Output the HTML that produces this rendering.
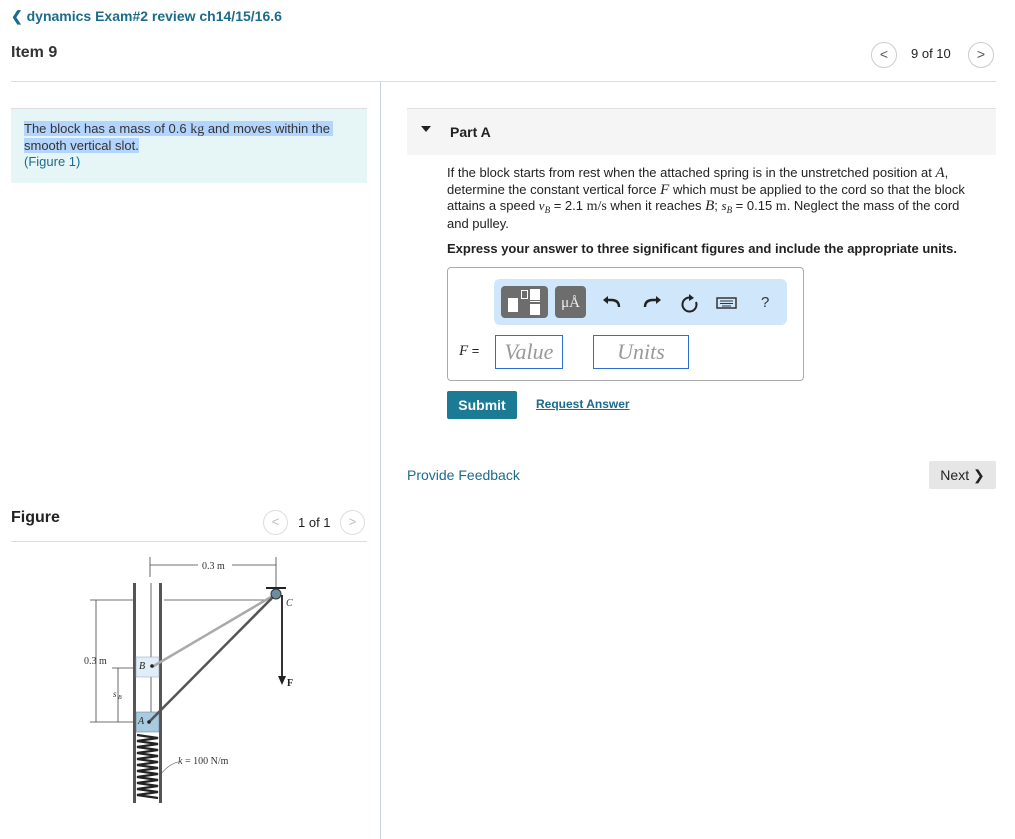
<!DOCTYPE html>
<html><head><meta charset="utf-8"><style>
body{margin:0;width:1015px;height:839px;background:#fff;font-family:"Liberation Sans",Arial,sans-serif;color:#333;position:relative;overflow:hidden}
.a{position:absolute}
.m{font-family:"Liberation Serif",serif;font-style:italic}
sub{line-height:0;font-size:9px;vertical-align:-3px}
</style></head><body>
<div class="a" style="left:11px;top:8px;font-size:14px;font-weight:bold;color:#1c6b8c">&#10094; dynamics Exam#2 review ch14/15/16.6</div>
<div class="a" style="left:11px;top:44px;font-size:16px;font-weight:bold;color:#333">Item 9</div>
<div class="a" style="left:871px;top:42px;width:24px;height:24px;border:1px solid #ccc;border-radius:50%;text-align:center;line-height:23px;color:#555;font-size:14px">&lt;</div>
<div class="a" style="left:911px;top:46px;font-size:13px;color:#222">9 of 10</div>
<div class="a" style="left:968px;top:42px;width:24px;height:24px;border:1px solid #ccc;border-radius:50%;text-align:center;line-height:23px;color:#555;font-size:14px">&gt;</div>
<div class="a" style="left:11px;top:81px;width:985px;height:1px;background:#ddd"></div>
<div class="a" style="left:380px;top:82px;width:1px;height:757px;background:#c5d3dc"></div>

<div class="a" style="left:11px;top:108px;width:356px;height:74px;background:#e6f6f6;border-top:1px solid #ddd"></div>
<div class="a" style="left:24px;top:121px;font-size:13px;line-height:16px;color:#333"><span style="background:#b3d4fc;padding-right:3px">The block has a mass of 0.6 <span style="font-family:'Liberation Serif',serif;font-size:14px">kg</span> and moves within the</span><br><span style="background:#b3d4fc">smooth vertical slot.</span><br><span style="color:#1c6b8c">(Figure 1)</span></div>

<div class="a" style="left:407px;top:108px;width:589px;height:46px;background:#f5f5f5;border-top:1px solid #e0e0e0"></div>
<div class="a" style="left:421px;top:126px;width:0;height:0;border-left:5px solid transparent;border-right:5px solid transparent;border-top:6px solid #222"></div>
<div class="a" style="left:450px;top:124px;font-size:14px;font-weight:bold;color:#222">Part A</div>
<div class="a" style="left:447px;top:165px;width:526px;font-size:13px;line-height:16.6px;color:#222">If the block starts from rest when the attached spring is in the unstretched position at <span class="m" style="font-size:15px">A</span>, determine the constant vertical force <span class="m" style="font-size:15px">F</span> which must be applied to the cord so that the block attains a speed <span class="m">v<sub>B</sub></span> = 2.1 <span style="font-family:'Liberation Serif',serif;font-size:14px">m/s</span> when it reaches <span class="m" style="font-size:15px">B</span>; <span class="m">s<sub>B</sub></span> = 0.15 <span style="font-family:'Liberation Serif',serif;font-size:14px">m</span>. Neglect the mass of the cord and pulley.</div>
<div class="a" style="left:447px;top:241px;font-size:13px;font-weight:bold;color:#222">Express your answer to three significant figures and include the appropriate units.</div>

<div class="a" style="left:447px;top:267px;width:355px;height:112px;border:1px solid #aaa;border-radius:4px"></div>
<div class="a" style="left:494px;top:279px;width:293px;height:46px;background:#d0e6fb;border-radius:6px"></div>
<div class="a" style="left:501px;top:286px;width:47px;height:32px;background:#6d6d6d;border-radius:4px"></div>
<div class="a" style="left:508px;top:298px;width:10px;height:14px;background:#fff"></div>
<div class="a" style="left:521px;top:290px;width:5px;height:7px;border:1px solid #fff"></div>
<div class="a" style="left:530px;top:289px;width:10px;height:11px;background:#fff"></div>
<div class="a" style="left:530px;top:301px;width:10px;height:1px;background:#fff"></div>
<div class="a" style="left:530px;top:304px;width:10px;height:11px;background:#fff"></div>
<div class="a" style="left:555px;top:286px;width:31px;height:32px;background:#6d6d6d;border-radius:4px;color:#eee;font-family:'Liberation Serif',serif;font-size:15px;text-align:center;line-height:34px">μÅ</div>
<svg class="a" style="left:600px;top:290px" width="180" height="24" viewBox="0 0 180 24">
<path d="M19 17c0-5-3-7-8-7H7" stroke="#222" stroke-width="2.4" fill="none"/><path d="M3 10l5-4v8z" fill="#222"/>
<path d="M45 17c0-5 3-7 8-7h4" stroke="#222" stroke-width="2.4" fill="none"/><path d="M61 10l-5-4v8z" fill="#222"/>
<path d="M92 8a7 7 0 1 0 4 4" stroke="#222" stroke-width="2" fill="none"/><path d="M89 4l5 4-5 3z" fill="#222"/>
<rect x="117" y="8" width="19" height="10" fill="none" stroke="#333" stroke-width="1.5"/><path d="M120 11h13M120 13.5h13M122 16h9" stroke="#333" stroke-width="1"/>
<text x="161" y="17" font-size="15" fill="#333" font-family="Liberation Sans">?</text>
</svg>
<div class="a" style="left:459px;top:343px;font-size:13px;color:#222"><span class="m" style="font-size:15px">F</span> =</div>
<div class="a" style="left:495px;top:335px;width:66px;height:32px;border:1px solid #2f6fd2;font-family:'Liberation Serif',serif;font-style:italic;font-size:22px;color:#999;text-align:center;line-height:32px">Value</div>
<div class="a" style="left:593px;top:335px;width:94px;height:32px;border:1px solid #2f6fd2;font-family:'Liberation Serif',serif;font-style:italic;font-size:22px;color:#999;text-align:center;line-height:32px">Units</div>
<div class="a" style="left:447px;top:391px;width:70px;height:28px;background:#1b7a94;border-radius:2px;color:#fff;font-weight:bold;font-size:14px;text-align:center;line-height:28px">Submit</div>
<div class="a" style="left:536px;top:397px;font-size:12px;font-weight:bold;color:#1c6b8c;text-decoration:underline">Request Answer</div>

<div class="a" style="left:407px;top:467px;font-size:14px;color:#1c6b8c">Provide Feedback</div>
<div class="a" style="left:929px;top:461px;width:67px;height:28px;background:#e6e6e6;border-radius:2px;font-size:14px;color:#222;text-align:center;line-height:28px">Next &#10095;</div>

<div class="a" style="left:11px;top:509px;font-size:16px;font-weight:bold;color:#222">Figure</div>
<div class="a" style="left:263px;top:510px;width:23px;height:23px;border:1px solid #ddd;border-radius:50%;text-align:center;line-height:22px;color:#bbb;font-size:13px">&lt;</div>
<div class="a" style="left:298px;top:515px;font-size:13px;color:#222">1 of 1</div>
<div class="a" style="left:340px;top:510px;width:23px;height:23px;border:1px solid #ddd;border-radius:50%;text-align:center;line-height:22px;color:#bbb;font-size:13px">&gt;</div>
<div class="a" style="left:11px;top:541px;width:356px;height:1px;background:#ddd"></div>

<svg class="a" style="left:0;top:0" width="380" height="839" font-family="Liberation Serif">
<g stroke="#444" stroke-width="0.8" fill="none">
<path d="M150 557v20M276 557v30M150 565h48M232 565h44"/>
<path d="M90 600h44M164 600h108M96 600v122M90 722h44M112 668h22M118 668v54"/>
<path d="M151 583v130"/>
</g>
<text x="202" y="569" font-size="10" fill="#333">0.3 m</text>
<text x="84" y="664" font-size="10" fill="#333">0.3 m</text>
<text x="113" y="697" font-size="9" font-style="italic" fill="#333">s</text><text x="118" y="699" font-size="6" font-style="italic" fill="#333">B</text>
<rect x="133" y="583" width="3" height="220" fill="#555"/><rect x="159" y="583" width="3" height="220" fill="#555"/>
<rect x="136" y="657" width="23" height="20" fill="#dfeef7" stroke="#99b" stroke-width="0.5"/>
<rect x="136" y="712" width="23" height="20" fill="#a9cbe0" stroke="#678" stroke-width="0.5"/>
<path d="M137 735l21 3-21 3 21 3-21 3 21 3-21 3 21 3-21 3 21 3-21 3 21 3-21 3 21 3-21 3 21 3-21 3 21 3-21 3 21 3-21 3 21 3" stroke="#222" stroke-width="2.2" fill="none"/>
<line x1="152" y1="667" x2="276" y2="594" stroke="#aaa" stroke-width="2.5"/>
<line x1="149" y1="722" x2="276" y2="594" stroke="#555" stroke-width="2.5"/>
<path d="M266 588h20" stroke="#222" stroke-width="2"/>
<circle cx="276" cy="594" r="5" fill="#6a8ea0" stroke="#333" stroke-width="1"/>
<line x1="282" y1="595" x2="282" y2="676" stroke="#333" stroke-width="2"/><path d="M278 676h8l-4 9z" fill="#222"/>
<text x="286" y="606" font-size="10" font-style="italic" fill="#333">C</text>
<text x="287" y="686" font-size="10" font-weight="bold" fill="#222">F</text>
<text x="139" y="669" font-size="10" font-style="italic" fill="#222">B</text><circle cx="152" cy="666" r="1.8" fill="#222"/>
<text x="138" y="724" font-size="10" font-style="italic" fill="#222">A</text><circle cx="149" cy="722" r="1.8" fill="#222"/>
<path d="M160 775c4-5 10-11 18-13" stroke="#555" stroke-width="0.6" fill="none"/>
<text x="178" y="764" font-size="10" fill="#333"><tspan font-style="italic">k</tspan> = 100 N/m</text>
</svg>
</body></html>
